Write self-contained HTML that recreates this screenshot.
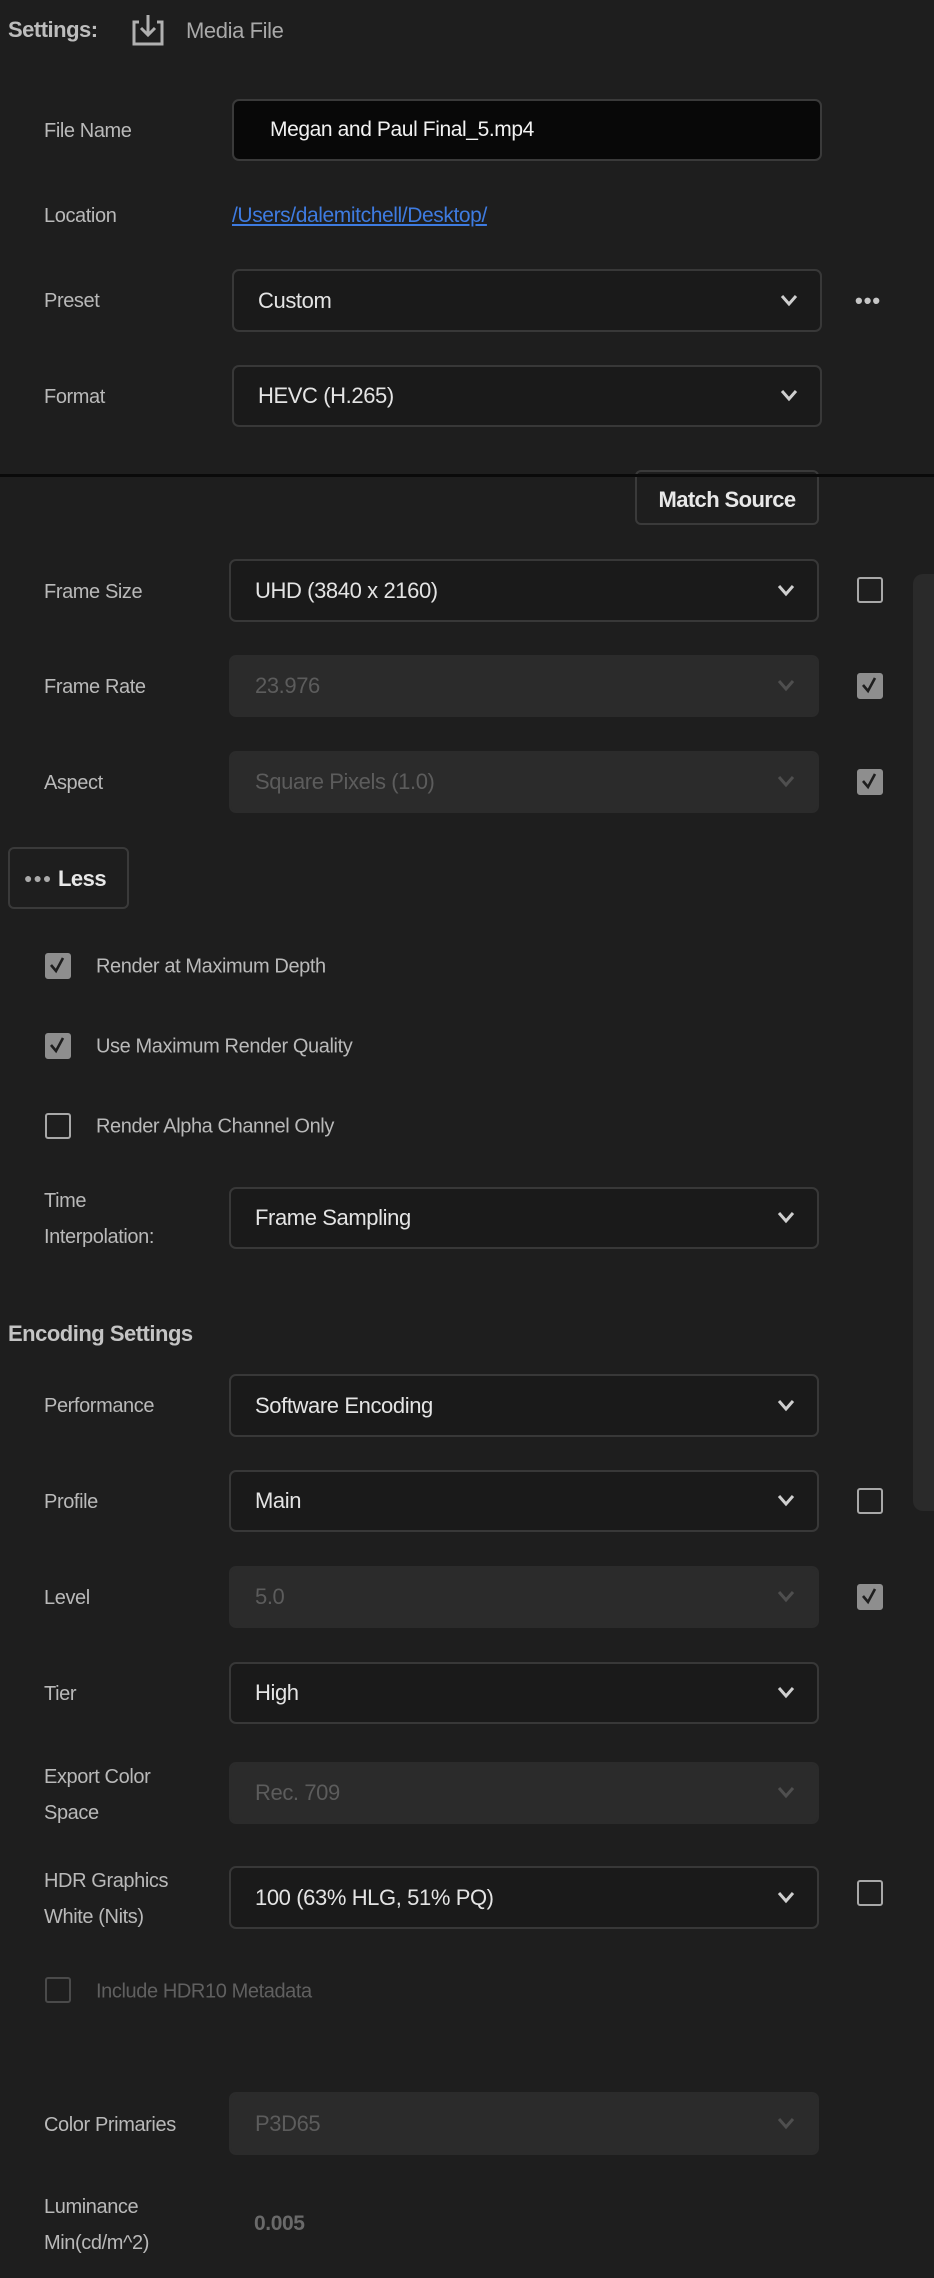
<!DOCTYPE html>
<html><head><meta charset="utf-8"><style>
html,body{margin:0;padding:0;}
body{width:934px;height:2278px;background:#1e1e1e;position:relative;overflow:hidden;font-family:"Liberation Sans",sans-serif;}
.a{position:absolute;}
.lbl{position:absolute;left:44px;color:#b9b9b9;font-size:20px;line-height:36px;transform:translateY(-50%);white-space:nowrap;letter-spacing:-0.4px}
.lbl2{position:absolute;left:44px;color:#b9b9b9;font-size:20px;line-height:36px;white-space:nowrap;letter-spacing:-0.4px}
.box{position:absolute;left:229px;width:590px;height:60px;box-sizing:border-box;background:#1a1a1a;border:2px solid #383838;border-radius:7px;color:#e4e4e4;font-size:22px;line-height:56px;padding-left:24px;letter-spacing:-0.4px}
.box.t{left:232px;}
.dis{background:#2b2b2b;border-color:#2b2b2b;color:#5c5c5c;}
.chev{position:absolute;right:22px;top:20px;width:18px;height:13px}
.cb{position:absolute;width:26px;height:26px;box-sizing:border-box;border:2.5px solid #a8a8a8;border-radius:3px}
.cb.on{background:#8e8e8e;border-color:#8e8e8e}
.cb.off{border-color:#4a4a4a}
.cbt{position:absolute;left:96px;color:#b9b9b9;font-size:20px;transform:translateY(-50%);white-space:nowrap;letter-spacing:-0.4px}
</style></head><body>
<div class="a" style="left:8px;top:17px;color:#bdbdbd;font-size:22px;font-weight:bold;letter-spacing:-0.5px">Settings:</div>
<svg class="a" style="left:131px;top:13px" width="34" height="34" viewBox="0 0 34 34"><path d="M8 9 H3 V31 H31 V9 H26" fill="none" stroke="#b0b0b0" stroke-width="3"/><path d="M17 2 V22 M10 15 L17 22 L24 15" fill="none" stroke="#b0b0b0" stroke-width="3"/></svg>
<div class="a" style="left:186px;top:18px;color:#a9a9a9;font-size:22px;letter-spacing:-0.4px">Media File</div>

<div class="lbl" style="top:131px">File Name</div>
<div class="box t" style="top:99px;height:62px;background:#080808;border-color:#3a3a3a;color:#f2f2f2;padding-left:36px;line-height:58px;font-size:21px">Megan and Paul Final_5.mp4</div>

<div class="lbl" style="top:216px">Location</div>
<div class="a" style="left:232px;top:204px;color:#3e7be0;font-size:21px;text-decoration:underline;letter-spacing:-0.4px">/Users/dalemitchell/Desktop/</div>

<div class="lbl" style="top:301px">Preset</div>
<div class="box t" style="top:269px;height:63px;line-height:59px">Custom<svg class="chev" style="top:23px" viewBox="0 0 18 13"><path d="M2 2 L9 10 L16 2" fill="none" stroke="#cfcfcf" stroke-width="3"/></svg></div>
<div class="a" style="left:855px;top:288px;color:#c6c6c6;font-size:22px;font-weight:bold;letter-spacing:1px">•••</div>

<div class="lbl" style="top:397px">Format</div>
<div class="box t" style="top:365px;height:62px;line-height:58px">HEVC (H.265)<svg class="chev" style="top:22px" viewBox="0 0 18 13"><path d="M2 2 L9 10 L16 2" fill="none" stroke="#cfcfcf" stroke-width="3"/></svg></div>

<div class="a" style="left:635px;top:470px;width:184px;height:55px;box-sizing:border-box;border:2px solid #3a3a3a;border-radius:6px;color:#e8e8e8;font-size:22px;font-weight:bold;text-align:center;line-height:56px;letter-spacing:-0.6px">Match Source</div>
<div class="a" style="left:0;top:474px;width:934px;height:3px;background:#0a0a0a"></div>

<div class="a" style="left:913px;top:574px;width:21px;height:937px;background:#2a2a2a;border-radius:10px 0 0 10px"></div>

<div class="lbl" style="top:592px">Frame Size</div>
<div class="box" style="top:559px;height:63px;line-height:59px">UHD (3840 x 2160)<svg class="chev" style="top:23px" viewBox="0 0 18 13"><path d="M2 2 L9 10 L16 2" fill="none" stroke="#cfcfcf" stroke-width="3"/></svg></div>
<div class="cb" style="left:857px;top:577px"></div>

<div class="lbl" style="top:687px">Frame Rate</div>
<div class="box dis" style="top:655px;height:62px;line-height:58px">23.976<svg class="chev" style="top:22px" viewBox="0 0 18 13"><path d="M2 2 L9 10 L16 2" fill="none" stroke="#4f4f4f" stroke-width="3"/></svg></div>
<div class="cb on" style="left:857px;top:673px"><svg width="21" height="21" viewBox="0 0 21 21"><path d="M4 10 L9 16 L16 3" fill="none" stroke="#1e1e1e" stroke-width="2.6"/></svg></div>

<div class="lbl" style="top:783px">Aspect</div>
<div class="box dis" style="top:751px;height:62px;line-height:58px">Square Pixels (1.0)<svg class="chev" style="top:22px" viewBox="0 0 18 13"><path d="M2 2 L9 10 L16 2" fill="none" stroke="#4f4f4f" stroke-width="3"/></svg></div>
<div class="cb on" style="left:857px;top:769px"><svg width="21" height="21" viewBox="0 0 21 21"><path d="M4 10 L9 16 L16 3" fill="none" stroke="#1e1e1e" stroke-width="2.6"/></svg></div>

<div class="a" style="left:8px;top:847px;width:121px;height:62px;box-sizing:border-box;border:2px solid #3a3a3a;border-radius:6px;color:#e8e8e8;font-size:22px;font-weight:bold;line-height:58px;padding-left:14px;letter-spacing:-0.5px"><span style="color:#aaa;font-size:14px;letter-spacing:1px;vertical-align:3px">●●●</span> Less</div>

<div class="cb on" style="left:45px;top:953px"><svg width="21" height="21" viewBox="0 0 21 21"><path d="M4 10 L9 16 L16 3" fill="none" stroke="#1e1e1e" stroke-width="2.6"/></svg></div>
<div class="cbt" style="top:967px">Render at Maximum Depth</div>
<div class="cb on" style="left:45px;top:1033px"><svg width="21" height="21" viewBox="0 0 21 21"><path d="M4 10 L9 16 L16 3" fill="none" stroke="#1e1e1e" stroke-width="2.6"/></svg></div>
<div class="cbt" style="top:1047px">Use Maximum Render Quality</div>
<div class="cb" style="left:45px;top:1113px"></div>
<div class="cbt" style="top:1127px">Render Alpha Channel Only</div>

<div class="lbl2" style="top:1183px">Time<br>Interpolation:</div>
<div class="box" style="top:1187px;height:62px;line-height:58px">Frame Sampling<svg class="chev" style="top:22px" viewBox="0 0 18 13"><path d="M2 2 L9 10 L16 2" fill="none" stroke="#cfcfcf" stroke-width="3"/></svg></div>

<div class="a" style="left:8px;top:1321px;color:#c4c4c4;font-size:22px;font-weight:bold;letter-spacing:-0.5px">Encoding Settings</div>

<div class="lbl" style="top:1406px">Performance</div>
<div class="box" style="top:1374px;height:63px;line-height:59px">Software Encoding<svg class="chev" style="top:23px" viewBox="0 0 18 13"><path d="M2 2 L9 10 L16 2" fill="none" stroke="#cfcfcf" stroke-width="3"/></svg></div>

<div class="lbl" style="top:1502px">Profile</div>
<div class="box" style="top:1470px;height:62px;line-height:58px">Main<svg class="chev" style="top:22px" viewBox="0 0 18 13"><path d="M2 2 L9 10 L16 2" fill="none" stroke="#cfcfcf" stroke-width="3"/></svg></div>
<div class="cb" style="left:857px;top:1488px"></div>

<div class="lbl" style="top:1598px">Level</div>
<div class="box dis" style="top:1566px;height:62px;line-height:58px">5.0<svg class="chev" style="top:22px" viewBox="0 0 18 13"><path d="M2 2 L9 10 L16 2" fill="none" stroke="#4f4f4f" stroke-width="3"/></svg></div>
<div class="cb on" style="left:857px;top:1584px"><svg width="21" height="21" viewBox="0 0 21 21"><path d="M4 10 L9 16 L16 3" fill="none" stroke="#1e1e1e" stroke-width="2.6"/></svg></div>

<div class="lbl" style="top:1694px">Tier</div>
<div class="box" style="top:1662px;height:62px;line-height:58px">High<svg class="chev" style="top:22px" viewBox="0 0 18 13"><path d="M2 2 L9 10 L16 2" fill="none" stroke="#cfcfcf" stroke-width="3"/></svg></div>

<div class="lbl2" style="top:1759px">Export Color<br>Space</div>
<div class="box dis" style="top:1762px;height:62px;line-height:58px">Rec. 709<svg class="chev" style="top:22px" viewBox="0 0 18 13"><path d="M2 2 L9 10 L16 2" fill="none" stroke="#4f4f4f" stroke-width="3"/></svg></div>

<div class="lbl2" style="top:1863px">HDR Graphics<br>White (Nits)</div>
<div class="box" style="top:1866px;height:63px;line-height:59px">100 (63% HLG, 51% PQ)<svg class="chev" style="top:23px" viewBox="0 0 18 13"><path d="M2 2 L9 10 L16 2" fill="none" stroke="#cfcfcf" stroke-width="3"/></svg></div>
<div class="cb" style="left:857px;top:1880px"></div>

<div class="cb off" style="left:45px;top:1977px"></div>
<div class="cbt" style="top:1992px;color:#606060">Include HDR10 Metadata</div>

<div class="lbl" style="top:2125px">Color Primaries</div>
<div class="box dis" style="top:2092px;height:63px;line-height:59px">P3D65<svg class="chev" style="top:23px" viewBox="0 0 18 13"><path d="M2 2 L9 10 L16 2" fill="none" stroke="#4f4f4f" stroke-width="3"/></svg></div>

<div class="lbl2" style="top:2189px">Luminance<br>Min(cd/m^2)</div>
<div class="a" style="left:254px;top:2212px;color:#6a6a6a;font-size:21px;font-weight:bold;letter-spacing:-0.4px">0.005</div>
</body></html>
